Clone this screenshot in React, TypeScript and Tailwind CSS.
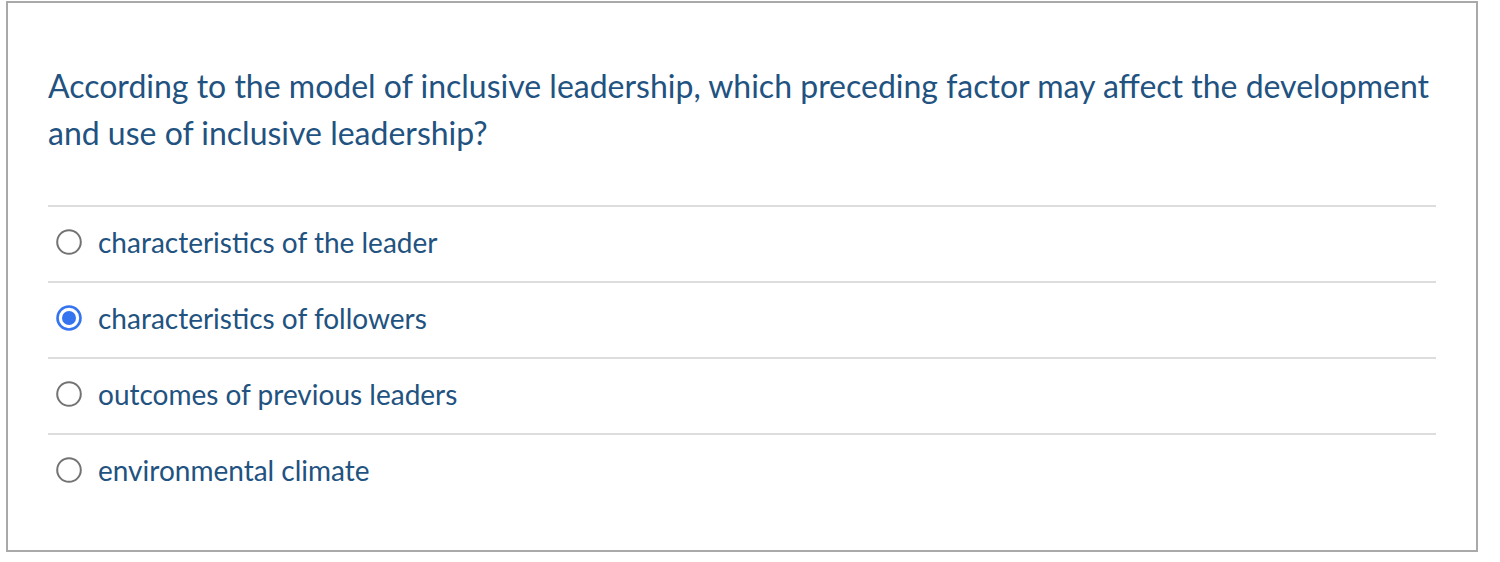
const options = [
  "characteristics of the leader",
  "characteristics of followers",
  "outcomes of previous leaders",
  "environmental climate",
];

function Radio({ checked }: { checked: boolean }) {
  return (
    <svg width="26" height="26" viewBox="0 0 26 26" className="shrink-0">
      {checked ? (
        <>
          <circle cx="13" cy="13" r="11.5" fill="white" stroke="#3474ef" strokeWidth="2.6" />
          <circle cx="13" cy="13" r="7" fill="#3474ef" />
        </>
      ) : (
        <circle cx="13" cy="13" r="11.8" fill="white" stroke="#737373" strokeWidth="2" />
      )}
    </svg>
  );
}

export default function App() {
  const selected = 1;

  return (
    <div className="h-[562px] w-[1500px] bg-white font-['Lato','Noto_Sans',sans-serif]">
      <div className="ml-[6px] mt-[1px] h-[551px] w-[1472px] border-2 border-[#a9a9a9] px-[40px] pt-[59px]">
        <p className="text-[32px] leading-[47px] text-[#22527f]">
          According to the model of inclusive leadership, which preceding factor may affect the development and use of inclusive leadership?
        </p>
        <div className="mt-[49px]">
          {options.map((opt, i) => (
            <div key={opt} className="border-t-2 border-[#dddddd]">
              <label className="flex h-[74px] items-center pb-[4px] pl-[8px]">
                <Radio checked={i === selected} />
                <span className="ml-[16px] text-[28px] text-[#22527f]">{opt}</span>
              </label>
            </div>
          ))}
        </div>
      </div>
    </div>
  );
}
